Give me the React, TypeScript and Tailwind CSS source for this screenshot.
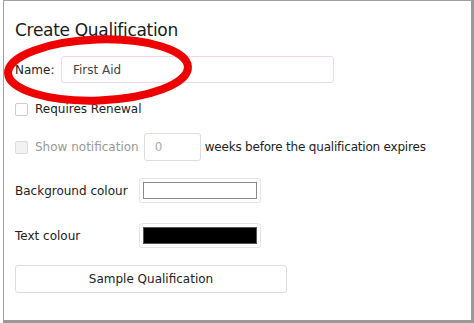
import React from "react";

export default function App() {
  return (
    <div className="w-[474px] h-[323px] bg-white relative overflow-hidden" style={{ fontFamily: '"DejaVu Sans", sans-serif' }}>
      <div className="absolute left-[3px] top-0 w-[471px] h-[323px] border-l border-t border-[#a0a0a0] border-r-[3px] border-b-[3px] border-r-[#999] border-b-[#999] pointer-events-none" />
      <div className="pl-[15px] pt-[19px] text-[#222]">
        <h1 className="text-[17px] leading-[22px] text-[#1a1a1a] tracking-[-0.3px]">Create Qualification</h1>
        <div className="flex items-center mt-[15px] h-[27px]">
          <span className="text-[12px] w-[46px]">Name:</span>
          <div className="w-[273px] h-[27px] border border-[#f0d6e6] rounded-[3px] flex items-center pl-[11px] text-[12px] text-[#444]">First Aid</div>
        </div>
        <div className="flex items-center mt-[19px] h-[14px]">
          <div className="w-[13px] h-[13px] border border-[#ccc] rounded-[2px] bg-white" />
          <span className="ml-[7px] text-[12px]">Requires Renewal</span>
        </div>
        <div className="flex items-center mt-[17px] h-[28px]">
          <div className="w-[13px] h-[13px] border border-[#ddd] rounded-[2px] bg-[#f2f2f2]" />
          <span className="ml-[7px] text-[12px] text-[#999]">Show notification</span>
          <div className="ml-[5px] w-[57px] h-[28px] border border-[#ddd] rounded-[3px] flex items-center pl-[10px] text-[12px] text-[#aaa]">0</div>
          <span className="ml-[4px] text-[12px] tracking-[-0.2px]">weeks before the qualification expires</span>
        </div>
        <div className="flex items-center mt-[17px] h-[25px]">
          <span className="text-[12px] w-[124px]">Background colour</span>
          <div className="w-[122px] h-[25px] border border-[#e4e4e4] rounded-[3px] p-[3px]">
            <div className="w-full h-full border border-[#888] bg-white" />
          </div>
        </div>
        <div className="flex items-center mt-[20px] h-[25px]">
          <span className="text-[12px] w-[124px]">Text colour</span>
          <div className="w-[122px] h-[25px] border border-[#e4e4e4] rounded-[3px] p-[3px]">
            <div className="w-full h-full border border-[#555] bg-black" />
          </div>
        </div>
        <div className="mt-[17px] w-[272px] h-[28px] border border-[#ddd] rounded-[3px] flex items-center justify-center text-[12px]">Sample Qualification</div>
      </div>
      <svg className="absolute left-0 top-0 pointer-events-none" width="474" height="323">
        <ellipse cx="98" cy="70" rx="90" ry="30.5" fill="none" stroke="#ee0000" strokeWidth="8" transform="rotate(-2 98 70)" />
      </svg>
    </div>
  );
}
